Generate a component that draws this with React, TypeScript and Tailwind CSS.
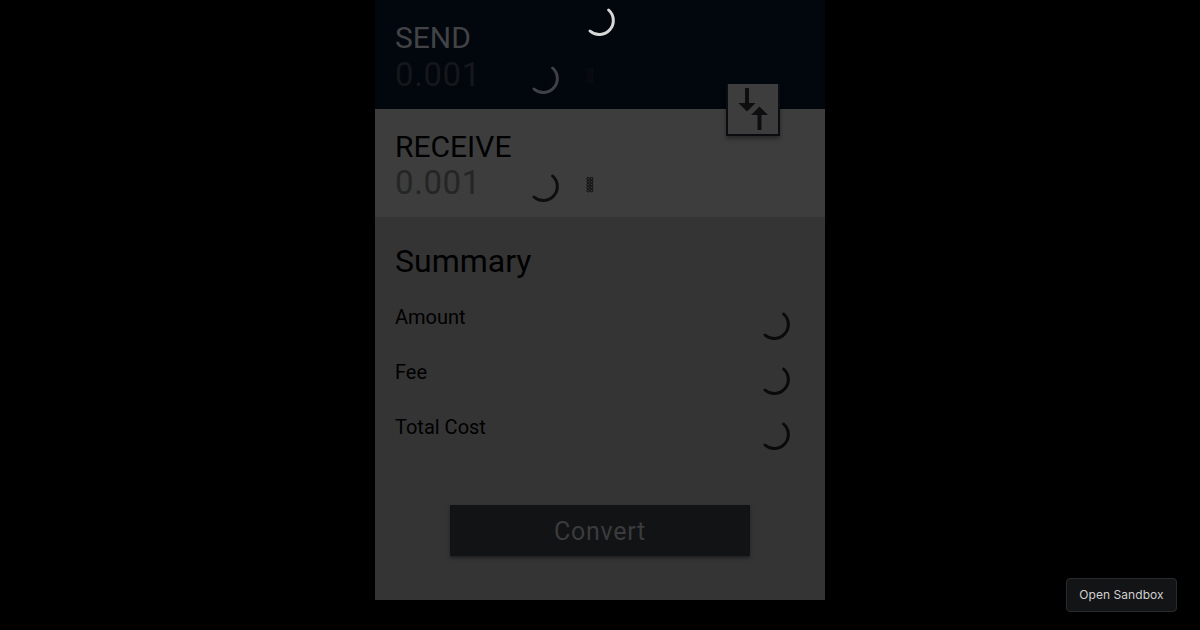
const Spinner = ({ color, className = "" }: { color: string; className?: string }) => (
  <svg width="32" height="32" viewBox="0 0 32 32" fill="none" className={className}>
    <path d="M24.6 5A14 14 0 0 1 6 26" stroke={color} strokeWidth="3" strokeLinecap="round" />
  </svg>
);

const Dots = ({ color }: { color: string }) => (
  <svg width="8" height="16" viewBox="0 0 8 16" fill="none">
    {[1.5, 4.5, 7.5, 10.5, 13.5].map((y) => (
      <g key={y}>
        <rect x="1" y={y - 1.1} width="2.4" height="2.4" rx="0.8" stroke={color} strokeWidth="1" />
        <rect x="4.4" y={y - 1.1} width="2.4" height="2.4" rx="0.8" stroke={color} strokeWidth="1" />
      </g>
    ))}
  </svg>
);

const SwapIcon = () => (
  <svg width="50" height="50" viewBox="0 0 50 50" fill="#0e0e10">
    <path d="M17 4h4v15h6.5l-8.5 8.5-8.5-8.5H17z" />
    <path d="M29.5 46h4V31H40l-8.5-8.5L23 31h6.5z" />
  </svg>
);

const Row = ({ label }: { label: string }) => (
  <div className="flex h-[55px] items-start justify-between">
    <span className="text-[20px] leading-[30px] text-black">{label}</span>
    <Spinner color="#0a0a0c" className="mt-[7px] mr-[14px]" />
  </div>
);

export default function App() {
  return (
    <div className="h-[630px] w-[1200px] overflow-hidden bg-black font-['Roboto',sans-serif]">
      <div className="relative mx-auto h-[600px] w-[450px] bg-[#343434]">
        <div className="relative h-[109px] bg-[#02060d] pl-5 pt-[20px]">
          <div className="text-[30px] leading-[36px] text-[#424346]">SEND</div>
          <div className="flex items-start">
            <span className="w-[133px] text-[33px] leading-[37px] tracking-[0.6px] text-[#15171b]">0.001</span>
            <Spinner color="#404144" className="mt-[7px]" />
            <span className="ml-[26px] mt-[12px]"><Dots color="#0d0f13" /></span>
          </div>
          <Spinner color="#d8d8d8" className="absolute left-[209px] top-[5px]" />
        </div>
        <div className="h-[108px] bg-[#3d3d3d] pl-5 pt-[20px]">
          <div className="text-[30px] leading-[36px] text-black">RECEIVE</div>
          <div className="flex items-start">
            <span className="w-[133px] text-[33px] leading-[35px] tracking-[0.6px] text-[#252526]">0.001</span>
            <Spinner color="#0e0e10" className="mt-[6px]" />
            <span className="ml-[26px] mt-[12px]"><Dots color="#0e0e10" /></span>
          </div>
        </div>
        <button className="absolute left-[351px] top-[84px] h-[52px] w-[54px] border-x-2 border-b-2 border-[#0a0c10] bg-[#3d3d3d] shadow-[0_3px_4px_rgba(0,0,0,0.35)]">
          <span className="block h-full w-full"><SwapIcon /></span>
        </button>
        <div className="px-5 pt-[26px]">
          <h2 className="text-[32px] leading-[36px] text-black">Summary</h2>
          <div className="mt-[23px]">
            <Row label="Amount" />
            <Row label="Fee" />
            <Row label="Total Cost" />
          </div>
          <div className="mt-[38px] flex justify-center">
            <button className="h-[51px] w-[300px] bg-[#121315] pt-[2px] text-[25px] tracking-[0.75px] text-[#3a3b3c] shadow-[0_2px_3px_rgba(0,0,0,0.4)]">Convert</button>
          </div>
        </div>
      </div>
      <button className="absolute bottom-[18px] right-[23px] h-[34px] w-[111px] rounded-[4px] border border-[#2a2b2d] bg-[#131416] font-['Inter',sans-serif] text-[12px] tracking-[0.05px] text-[#d0d0d0]">Open Sandbox</button>
    </div>
  );
}
